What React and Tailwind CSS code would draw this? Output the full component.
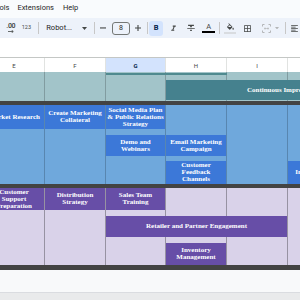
import React from "react";

const COLS = "grid-cols-[61px_61px_60px_61px_61px_62px]";
const COLSTART = ["col-start-1", "col-start-2", "col-start-3", "col-start-4", "col-start-5", "col-start-6"];

function Sep({ ml }) {
  return <div className={`w-px h-[12px] bg-[#c7c7c7] ${ml}`} />;
}

function Toolbar() {
  return (
    <div className="h-[20px] bg-[#edf2fa] flex items-center text-[#444746] shrink-0">
      <div className="w-[22px] flex flex-col items-center justify-center">
        <span className="text-[7px] leading-[7px] font-semibold tracking-[-0.3px]">.00</span>
        <svg width="6" height="3" viewBox="0 0 6 3"><path d="M0 1.5h5M3.5 0l1.8 1.5L3.5 3" stroke="#444746" strokeWidth="0.8" fill="none" /></svg>
      </div>
      <div className="w-[10px] flex justify-center text-[5.5px] leading-none">123</div>
      <Sep ml="ml-[7px]" />
      <div className="ml-[7px] w-[24px] text-[7.5px] leading-none text-[#1f1f1f] whitespace-nowrap">Robot...</div>
      <div className="ml-[11px] w-[6px] flex justify-center">
        <svg width="5" height="3" viewBox="0 0 5 3"><path d="M0 0h5L2.5 3z" fill="#444746" /></svg>
      </div>
      <Sep ml="ml-[7px]" />
      <div className="ml-[5px] w-[6px] flex justify-center">
        <svg width="6" height="2" viewBox="0 0 6 2"><rect y="0.4" width="6" height="1.1" fill="#444746" /></svg>
      </div>
      <div className="ml-[6px] w-[18px] h-[13px] border border-[#747775] rounded-[3px] flex items-center justify-center text-[7px] text-[#1f1f1f] leading-none">8</div>
      <div className="ml-[5px] w-[6px] flex justify-center">
        <svg width="6" height="6" viewBox="0 0 6 6"><path d="M0 3h6M3 0v6" stroke="#444746" strokeWidth="1.1" /></svg>
      </div>
      <Sep ml="ml-[6px]" />
      <div className="ml-[1px] w-[15px] h-[15px] rounded-[3px] bg-[#d3e3fd] flex items-center justify-center text-[7.5px] font-bold text-[#041e49] leading-none">B</div>
      <div className="ml-[3px] w-[14px] flex justify-center">
        <svg width="9" height="9" viewBox="0 0 24 24"><path d="M10 4v3h2.21l-3.42 8H6v3h8v-3h-2.21l3.42-8H18V4z" fill="#444746" /></svg>
      </div>
      <div className="ml-[4px] w-[14px] flex justify-center">
        <svg width="10" height="10" viewBox="0 0 24 24"><path d="M10 19h4v-3h-4v3zM5 4v3h5v3h4V7h5V4H5zM3 14h18v-2H3v2z" fill="#444746" /></svg>
      </div>
      <div className="ml-[4px] w-[14px] flex flex-col items-center">
        <span className="text-[7.5px] leading-[8px] text-[#444746]">A</span>
        <div className="w-[13px] h-[2px] bg-black" />
      </div>
      <Sep ml="ml-[4px]" />
      <div className="ml-[3px] w-[14px] flex flex-col items-center">
        <svg width="9" height="8" viewBox="0 0 24 20"><path d="M16.56 8.94L7.62 0 6.21 1.41l2.38 2.38-5.15 5.15c-.59.59-.59 1.54 0 2.12l5.5 5.5c.29.29.68.44 1.06.44s.77-.15 1.06-.44l5.5-5.5c.59-.58.59-1.53 0-2.12zM5.21 10L10 5.21 14.79 10H5.21zM19 11.5s-2 2.17-2 3.5c0 1.1.9 2 2 2s2-.9 2-2c0-1.33-2-3.5-2-3.5z" fill="#444746" /></svg>
        <div className="w-[12px] h-[2px] bg-[#d9dce0] mt-[1px]" />
      </div>
      <div className="ml-[4px] w-[14px] flex justify-center">
        <svg width="9" height="9" viewBox="0 0 24 24"><path d="M3 3v18h18V3H3zm8 16H5v-6h6v6zm0-8H5V5h6v6zm8 8h-6v-6h6v6zm0-8h-6V5h6v6z" fill="#444746" /></svg>
      </div>
      <div className="ml-[5px] w-[14px] flex justify-center">
        <svg width="9" height="9" viewBox="0 0 9 9">
          <path d="M0.5 0.5h2M6.5 0.5h2M0.5 8.5h2M6.5 8.5h2M0.5 0.5v2M8.5 0.5v2M0.5 6.5v2M8.5 6.5v2" stroke="#b4b6b8" strokeWidth="1" fill="none" />
          <path d="M2 4.5h2M5 4.5h2M3 3.5l1 1-1 1M6 3.5l-1 1 1 1" stroke="#b4b6b8" strokeWidth="0.8" fill="none" />
        </svg>
      </div>
      <div className="ml-[1px] w-[6px] flex justify-center">
        <svg width="4" height="2.5" viewBox="0 0 5 3"><path d="M0 0h5L2.5 3z" fill="#b4b6b8" /></svg>
      </div>
      <Sep ml="ml-[5px]" />
      <div className="ml-[2px] w-[12px] flex justify-center">
        <svg width="9" height="9" viewBox="0 0 24 24"><path d="M15 15H3v2h12v-2zm0-8H3v2h12V7zM3 13h18v-2H3v2zm0 8h18v-2H3v2zM3 3v2h18V3H3z" fill="#444746" /></svg>
      </div>
    </div>
  );
}

function Block({ pos, bg, children, extra = "" }) {
  return (
    <div className={`${pos} ${bg} mr-px flex items-center justify-center text-center text-white font-bold text-[7px] leading-[7px] whitespace-pre ${extra}`}>
      {children}
    </div>
  );
}

function BandRow({ rows, bg, line, children }) {
  return (
    <div className={`grid ${COLS} ${rows} shrink-0`}>
      {COLSTART.map((c) => (
        <div key={c} className={`${c} row-span-full ${bg} border-r ${line}`} />
      ))}
      {children}
    </div>
  );
}

export default function App() {
  return (
    <div className="w-[300px] h-[300px] overflow-hidden bg-[#f9fbfd] flex flex-col font-['Roboto',sans-serif]">
      {/* menu */}
      <div className="h-[16px] flex items-center text-[7.5px] text-[#1f1f1f] whitespace-nowrap shrink-0">
        <span className="ml-[-9px]">Tools</span>
        <span className="ml-[8px]">Extensions</span>
        <span className="ml-[9px]">Help</span>
      </div>
      <div className="h-[2px] shrink-0" />
      <Toolbar />
      <div className="h-[19px] bg-white shrink-0" />
      {/* sheet */}
      <div className="ml-[-16px] w-[366px] flex flex-col font-['Liberation_Serif',serif]">
        <div className={`grid ${COLS} h-[15px] bg-white border-t border-[#c4c7c5] shrink-0 font-['Roboto',sans-serif]`}>
          {["E", "F", "G", "H", "I", "J"].map((l) => (
            <div
              key={l}
              className={`flex items-center justify-center border-r border-[#e1e3e1] text-[6px] ${l === "G" ? "bg-[#d3e3fd] text-[#041e49] font-bold" : "text-[#444746]"}`}
            >
              {l}
            </div>
          ))}
        </div>
        {/* teal band */}
        <BandRow rows="grid-rows-[1px_2px_5px_20px_1px] h-[29px]" bg="bg-[#a2c4c9]" line="border-black/20">
          <div className="col-start-3 col-span-2 row-start-2 bg-[#4f8a8f]" />
          <div className="col-start-4 col-span-3 row-start-4 bg-[#45818e] flex items-center pl-[81px] whitespace-nowrap overflow-hidden text-white font-bold text-[7px] leading-[7px]">
            Continuous Improvement and Optimization
          </div>
        </BandRow>
        <div className="h-[4px] bg-[#434343] shrink-0" />
        {/* blue band */}
        <BandRow rows="grid-rows-[24px_6px_21px_5px_23px] h-[79px]" bg="bg-[#6fa8dc]" line="border-black/20">
          <Block pos="col-start-1 row-start-1" bg="bg-[#3c78d8]">Market Research</Block>
          <Block pos="col-start-2 row-start-1" bg="bg-[#3c78d8]">{"Create Marketing\nCollateral"}</Block>
          <Block pos="col-start-3 row-start-1" bg="bg-[#3c78d8]">{"Social Media Plan\n& Public Relations\nStrategy"}</Block>
          <Block pos="col-start-3 row-start-3" bg="bg-[#3c78d8]">{"Demo and\nWebinars"}</Block>
          <Block pos="col-start-4 row-start-3" bg="bg-[#3c78d8]">{"Email Marketing\nCampaign"}</Block>
          <Block pos="col-start-4 row-start-5" bg="bg-[#3c78d8]">{"Customer\nFeedback\nChannels"}</Block>
          <Block pos="col-start-6 row-start-5" bg="bg-[#3c78d8]">Innovation Lab</Block>
        </BandRow>
        <div className="h-[4px] bg-[#434343] shrink-0" />
        {/* purple band */}
        <BandRow rows="grid-rows-[22px_6px_21px_6px_22px] h-[77px]" bg="bg-[#d9d2e9]" line="border-black/30">
          <Block pos="col-start-1 row-start-1" bg="bg-[#674ea7]">{"Customer\nSupport\nPreparation"}</Block>
          <Block pos="col-start-2 row-start-1" bg="bg-[#674ea7]">{"Distribution\nStrategy"}</Block>
          <Block pos="col-start-3 row-start-1" bg="bg-[#674ea7]">{"Sales Team\nTraining"}</Block>
          <Block pos="col-start-3 col-span-3 row-start-3" bg="bg-[#674ea7]">Retailer and Partner Engagement</Block>
          <Block pos="col-start-4 row-start-5" bg="bg-[#674ea7]">{"Inventory\nManagement"}</Block>
        </BandRow>
        <div className="h-[5px] bg-[#434343] shrink-0" />
      </div>
      <div className="h-[22px] bg-[#f8f9fa] shrink-0" />
      <div className="flex-1 bg-[#e9eaeb] border-t border-[#dadce0]" />
    </div>
  );
}
